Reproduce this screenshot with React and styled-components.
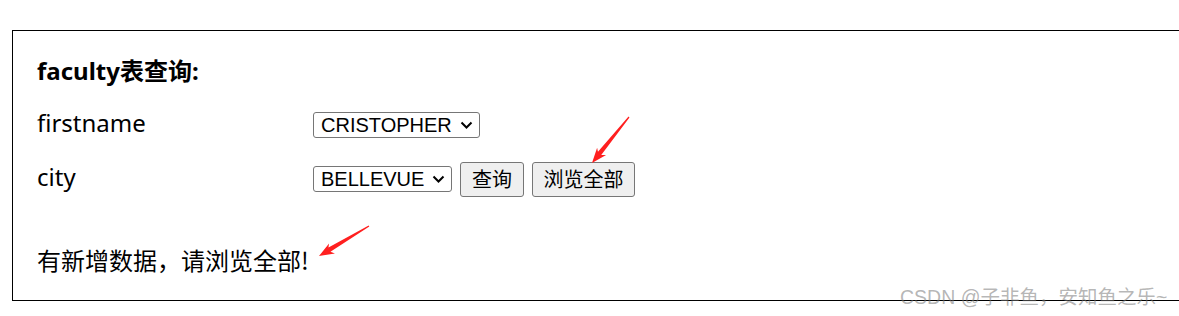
import React from "react";
import styled, { createGlobalStyle } from "styled-components";

const GlobalStyle = createGlobalStyle`
  html, body {
    margin: 0;
    padding: 0;
    background: #ffffff;
    overflow: hidden;
  }
  body {
    font-family: "Noto Sans", "Noto Sans CJK SC", sans-serif;
    color: #000;
  }
`;

const Page = styled.div`
  position: relative;
  width: 1179px;
  height: 316px;
  overflow: hidden;
  padding: 30px 0 0 12px;
  box-sizing: border-box;
`;

const Panel = styled.div`
  width: 1220px;
  height: 271px;
  box-sizing: border-box;
  border: 1px solid #000;
  padding: 23px 0 0 24px;
  display: flex;
  flex-direction: column;
`;

const Title = styled.div`
  font-size: 24px;
  font-weight: 700;
  line-height: 34px;
  height: 34px;
`;

const Form = styled.div`
  display: grid;
  grid-template-columns: 276px auto;
  grid-auto-rows: 36px;
  row-gap: 18px;
  margin-top: 19px;
  align-items: center;
`;

const Label = styled.div`
  font-size: 24px;
  line-height: 32px;
  padding-bottom: 4px;
`;

const Controls = styled.div`
  display: flex;
  align-items: center;
  gap: 8px;
`;

const SelectWrap = styled.div`
  position: relative;
  display: inline-flex;
  width: ${(p) => p.$w}px;
  height: 26px;
`;

const Select = styled.select`
  appearance: none;
  -webkit-appearance: none;
  width: 100%;
  height: 100%;
  font-family: "Liberation Sans", Arial, sans-serif;
  font-size: 20px;
  color: #000;
  background: #fff;
  border: 1px solid #767676;
  border-radius: 3px;
  padding: 0 24px 0 7px;
  box-sizing: border-box;
  margin: 0;
  outline: none;
`;

const Chevron = styled.svg`
  position: absolute;
  right: 7px;
  top: 50%;
  transform: translateY(-50%);
  pointer-events: none;
`;

const Button = styled.button`
  height: 35px;
  box-sizing: border-box;
  padding: 0 10px;
  margin: 0;
  font-family: "Noto Sans CJK SC", "Noto Sans", sans-serif;
  font-size: 20px;
  line-height: 1;
  color: #000;
  background: #efefef;
  border: 1px solid #767676;
  border-radius: 3px;
  width: ${(p) => p.$w}px;
`;

const Message = styled.div`
  margin-top: 46px;
  font-size: 24px;
  line-height: 34px;
  font-family: "Noto Sans CJK SC", "Noto Sans", sans-serif;
`;

const Overlay = styled.svg`
  position: absolute;
  left: 0;
  top: 0;
  pointer-events: none;
`;

const Watermark = styled.div`
  position: absolute;
  left: 900px;
  top: 284px;
  font-family: "Liberation Sans", "Noto Sans CJK SC", sans-serif;
  font-size: 19.5px;
  line-height: 26px;
  color: rgba(120, 120, 120, 0.55);
  white-space: nowrap;
`;

function Arrow({ x, y, tx, ty }) {
  const dx = tx - x;
  const dy = ty - y;
  const L = Math.sqrt(dx * dx + dy * dy);
  const angle = (Math.atan2(dy, dx) * 180) / Math.PI;
  const pts = [
    [0, -0.6],
    [L - 12, -2.2],
    [L - 15, -6],
    [L, 0],
    [L - 15, 5.5],
    [L - 12.5, 2.4],
    [0, 0.6],
  ]
    .map((p) => p.join(","))
    .join(" ");
  return (
    <g transform={`translate(${x} ${y}) rotate(${angle})`}>
      <polygon points={pts} fill="#ff1f1f" />
    </g>
  );
}

function Dropdown({ width, value }) {
  return (
    <SelectWrap $w={width}>
      <Select defaultValue={value}>
        <option>{value}</option>
      </Select>
      <Chevron width="13" height="9" viewBox="0 0 13 9">
        <path d="M1.5 2 L6.5 7 L11.5 2" fill="none" stroke="#000" strokeWidth="2" />
      </Chevron>
    </SelectWrap>
  );
}

export default function App() {
  return (
    <>
      <GlobalStyle />
      <Page>
        <Panel>
          <Title>faculty表查询:</Title>
          <Form>
            <Label>firstname</Label>
            <Controls>
              <Dropdown width={167} value="CRISTOPHER" />
            </Controls>
            <Label>city</Label>
            <Controls>
              <Dropdown width={139} value="BELLEVUE" />
              <Button $w={64}>查询</Button>
              <Button $w={103}>浏览全部</Button>
            </Controls>
          </Form>
          <Message>有新增数据，请浏览全部!</Message>
        </Panel>
        <Overlay width="1179" height="316" viewBox="0 0 1179 316">
          <Arrow x={629} y={117} tx={592} ty={163} />
          <Arrow x={369} y={226} tx={319} ty={256} />
        </Overlay>
        <Watermark>CSDN @子非鱼，安知鱼之乐~</Watermark>
      </Page>
    </>
  );
}
